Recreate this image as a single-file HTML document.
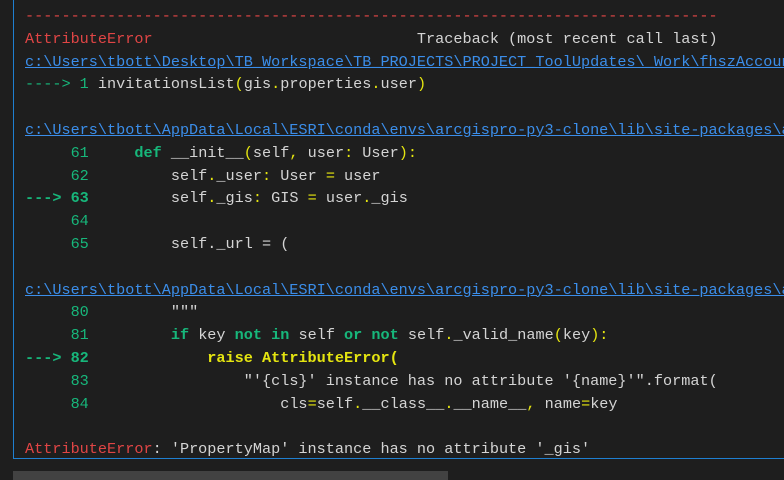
<!DOCTYPE html>
<html><head><meta charset="utf-8"><style>
html,body{margin:0;padding:0;background:#1e1e1e;width:784px;height:480px;overflow:hidden}
.box{position:absolute;left:13px;top:-2px;width:800px;height:461px;border:1px solid #1f7fd0;box-sizing:border-box;overflow:hidden}
pre{position:absolute;left:11px;top:6px;margin:0;font-family:"Liberation Mono",monospace;font-size:15.2px;line-height:22.8px;color:#d4d4d4;white-space:pre}
.r{color:#e04545}.g{color:#17b77b}.gb{color:#17b77b;font-weight:bold}.y{color:#e5e510}.yb{color:#e5e510;font-weight:bold}
.l{color:#3b8eea;text-decoration:underline}
.bar{position:absolute;left:13px;top:471px;width:435px;height:9px;background:#424242}
</style></head><body>
<div class="box"><pre><span class="r">----------------------------------------------------------------------------</span>
<span class="r">AttributeError</span>                             Traceback (most recent call last)
<span class="l">c:\Users\tbott\Desktop\TB_Workspace\TB_PROJECTS\PROJECT_ToolUpdates\_Work\fhszAccounts.py</span>
<span class="g">----&gt; 1</span> invitationsList<span class="y">(</span>gis<span class="y">.</span>properties<span class="y">.</span>user<span class="y">)</span>

<span class="l">c:\Users\tbott\AppData\Local\ESRI\conda\envs\arcgispro-py3-clone\lib\site-packages\arcgis</span>
<span class="g">     61</span>     <span class="gb">def</span> __init__<span class="y">(</span>self<span class="y">,</span> user<span class="y">:</span> User<span class="y">):</span>
<span class="g">     62</span>         self<span class="y">.</span>_user<span class="y">:</span> User <span class="y">=</span> user
<span class="gb">---&gt; 63</span>         self<span class="y">.</span>_gis<span class="y">:</span> GIS <span class="y">=</span> user<span class="y">.</span>_gis
<span class="g">     64</span> 
<span class="g">     65</span>         self._url = (

<span class="l">c:\Users\tbott\AppData\Local\ESRI\conda\envs\arcgispro-py3-clone\lib\site-packages\arcgis</span>
<span class="g">     80</span>         """
<span class="g">     81</span>         <span class="gb">if</span> key <span class="gb">not</span> <span class="gb">in</span> self <span class="gb">or</span> <span class="gb">not</span> self<span class="y">.</span>_valid_name<span class="y">(</span>key<span class="y">):</span>
<span class="gb">---&gt; 82</span>             <span class="yb">raise AttributeError(</span>
<span class="g">     83</span>                 "'{cls}' instance has no attribute '{name}'".format(
<span class="g">     84</span>                     cls<span class="y">=</span>self<span class="y">.</span>__class__<span class="y">.</span>__name__<span class="y">,</span> name<span class="y">=</span>key

<span class="r">AttributeError</span>: 'PropertyMap' instance has no attribute '_gis'</pre></div>
<div class="bar"></div>
</body></html>
